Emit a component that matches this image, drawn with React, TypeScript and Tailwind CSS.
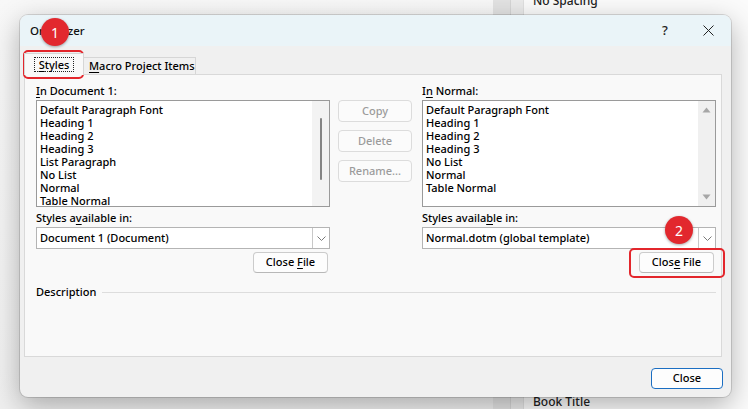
import React from "react";

const U = ({ children }: { children: React.ReactNode }) => (
  <span className="underline decoration-1 underline-offset-[2px]">{children}</span>
);

function ListBox({ items, arrows }: { items: string[]; arrows?: boolean }) {
  return (
    <div className="mt-[2px] h-[107px] border border-[#9a9a9a] bg-white flex">
      <div className="flex-1 pl-[3px] pt-[2px] leading-[13px] text-black">
        {items.map((t) => (
          <div key={t}>{t}</div>
        ))}
      </div>
      {arrows ? (
        <div className="w-[17px] bg-[#f0f0f0] flex flex-col items-center justify-between pt-[6px] pb-[6px]">
          <svg width="9" height="6" viewBox="0 0 9 6">
            <path d="M0.5 5.5 L4.5 0.5 L8.5 5.5 Z" fill="#a6a6a6" />
          </svg>
          <svg width="9" height="6" viewBox="0 0 9 6">
            <path d="M0.5 0.5 L4.5 5.5 L8.5 0.5 Z" fill="#a6a6a6" />
          </svg>
        </div>
      ) : (
        <div className="w-[17px] bg-[#f3f3f3] flex justify-center pt-[17px]">
          <div className="w-[2px] h-[62px] rounded-full bg-[#858585]" />
        </div>
      )}
    </div>
  );
}

function Combo({ text }: { text: string }) {
  return (
    <div className="mt-[2px] h-[22px] border border-[#b4b4b4] bg-white flex">
      <div className="flex-1 pl-[3px] flex items-center text-black">{text}</div>
      <div className="w-[17px] border-l border-[#c8c8c8] flex items-center justify-center">
        <svg width="9" height="5" viewBox="0 0 9 5">
          <path d="M0.5 0.5 L4.5 4.5 L8.5 0.5" fill="none" stroke="#7a7a7a" strokeWidth="1" />
        </svg>
      </div>
    </div>
  );
}

const normalItems = [
  "Default Paragraph Font",
  "Heading 1",
  "Heading 2",
  "Heading 3",
  "No List",
  "Normal",
  "Table Normal",
];
const docItems = [
  "Default Paragraph Font",
  "Heading 1",
  "Heading 2",
  "Heading 3",
  "List Paragraph",
  "No List",
  "Normal",
  "Table Normal",
];

function DisabledBtn({ children }: { children: React.ReactNode }) {
  return (
    <div className="h-[22px] rounded-[4px] border border-[#dcdcdc] bg-[#fbfbfb] text-[#9b9b9b] flex items-center justify-center">
      {children}
    </div>
  );
}

function CloseFileBtn({ children }: { children: React.ReactNode }) {
  return (
    <div className="mt-[3px] self-end mr-[2px] w-[75px] h-[21px] rounded-[4px] border border-[#cccccc] border-b-[#b8b8b8] bg-[#fdfdfd] flex items-center justify-center text-black">
      {children}
    </div>
  );
}

export default function App() {
  return (
    <div className="relative w-[748px] h-[409px] overflow-hidden flex font-['Noto_Sans',sans-serif] font-medium text-[11px] text-black bg-[#f3f3f3]">
      {/* background application */}
      <div className="w-[493px] bg-gradient-to-b from-[#f8f8f8] to-[#efefef]" />
      <div className="w-[17px] bg-[#e3e3e3]" />
      <div className="w-[13px] bg-[#ebebeb] border-l border-[#d6d6d6]" />
      <div className="flex-1 bg-[#fbfbfb] border-l border-[#e0e0e0] flex flex-col justify-between pl-[9px] text-[12px] text-[#222]">
        <div className="-mt-[7px] leading-[16px]">No Spacing</div>
        <div className="-mb-[1px] leading-[16px]">Book Title</div>
      </div>

      {/* dialog */}
      <div className="absolute left-[20px] top-[15px] w-[711px] h-[382px] rounded-[8px] bg-[#f0f0f0] shadow-[0_0_0_1px_rgba(0,0,0,0.13),0_8px_28px_rgba(0,0,0,0.30)] flex flex-col overflow-hidden">
        {/* title bar */}
        <div className="h-[31px] shrink-0 bg-[#eaf4f8] flex items-center">
          <div className="flex-1 pl-[10px] text-[11.5px] text-[#111]">Organizer</div>
          <div className="w-[46px] h-full flex items-center justify-center pl-[6px] text-[13px] text-[#222]">?</div>
          <div className="w-[46px] h-full flex items-center justify-center">
            <svg width="11" height="11" viewBox="0 0 11 11">
              <path d="M0.5 0.5 L10.5 10.5 M10.5 0.5 L0.5 10.5" stroke="#222" strokeWidth="1" />
            </svg>
          </div>
        </div>

        {/* body */}
        <div className="flex-1 flex flex-col pl-[4px] pr-[9px] pt-[7px] pb-[8px]">
          {/* tabs */}
          <div className="relative z-10 h-[21px] flex items-end">
            <div className="h-[22px] -mb-[1px] w-[60px] bg-[#f9f9f9] border border-b-0 border-[#d6d6d6] flex items-center justify-center">
              <span className="border border-dotted border-[#222] px-[4px] h-[15px] leading-[13px] text-black">
                <U>S</U>tyles
              </span>
            </div>
            <div className="h-[17px] w-[112px] bg-[#f0f0f0] border border-l-0 border-b-0 border-[#d6d6d6] flex items-center pl-[5px] text-black">
              <U>M</U>acro Project Items
            </div>
          </div>

          {/* panel */}
          <div className="h-[283px] bg-[#f9f9f9] border border-[#d9d9d9] flex flex-col">
            <div className="flex pl-[11px] pr-[5px] pt-[9px]">
              {/* left column */}
              <div className="w-[294px] flex flex-col">
                <div className="h-[14px] leading-[14px] text-black">
                  <U>I</U>n Document 1:
                </div>
                <ListBox items={docItems} />
                <div className="mt-[4px] h-[14px] leading-[14px] text-black">
                  Styles a<U>v</U>ailable in:
                </div>
                <Combo text="Document 1 (Document)" />
                <CloseFileBtn>
                  Close&nbsp;<U>F</U>ile
                </CloseFileBtn>
              </div>

              {/* buttons */}
              <div className="ml-[8px] w-[74px] pt-[16px] flex flex-col gap-[8px]">
                <DisabledBtn>Copy</DisabledBtn>
                <DisabledBtn>Delete</DisabledBtn>
                <DisabledBtn>Rename...</DisabledBtn>
              </div>

              {/* right column */}
              <div className="ml-[10px] w-[294px] flex flex-col">
                <div className="h-[14px] leading-[14px] text-black">
                  I<U>n</U> Normal:
                </div>
                <ListBox items={normalItems} arrows />
                <div className="mt-[4px] h-[14px] leading-[14px] text-black">
                  Styles availa<U>b</U>le in:
                </div>
                <Combo text="Normal.dotm (global template)" />
                <CloseFileBtn>
                  Clos<U>e</U>&nbsp;File
                </CloseFileBtn>
              </div>
            </div>

            <div className="mt-[12px] ml-[11px] mr-[5px] h-[14px] flex items-center text-black">
              <span className="leading-[14px]">Description</span>
              <div className="flex-1 h-px bg-[#dddddd] ml-[6px]" />
            </div>
          </div>

          {/* bottom */}
          <div className="mt-[11px] -mr-[1px] flex justify-end">
            <div className="w-[72px] h-[21px] rounded-[4px] border border-[#1b6ec2] bg-[#fdfdfd] flex items-center justify-center text-black">
              Close
            </div>
          </div>
        </div>
      </div>

      {/* annotations */}
      <div className="absolute left-[23px] top-[50px] w-[61px] h-[29px] rounded-[5px] border-2 border-[#e3262c]" />
      <div className="absolute left-[629px] top-[248px] w-[96px] h-[30px] rounded-[5px] border-2 border-[#e3262c]" />
      <div className="absolute left-[41px] top-[18px] w-[28px] h-[28px] rounded-full bg-[#e2282e] shadow-[0_1px_3px_rgba(0,0,0,0.35)] flex items-center justify-center text-white text-[14px] font-normal">
        1
      </div>
      <div className="absolute left-[665px] top-[216px] w-[28px] h-[28px] rounded-full bg-[#e2282e] shadow-[0_1px_3px_rgba(0,0,0,0.35)] flex items-center justify-center text-white text-[14px] font-normal">
        2
      </div>
    </div>
  );
}
